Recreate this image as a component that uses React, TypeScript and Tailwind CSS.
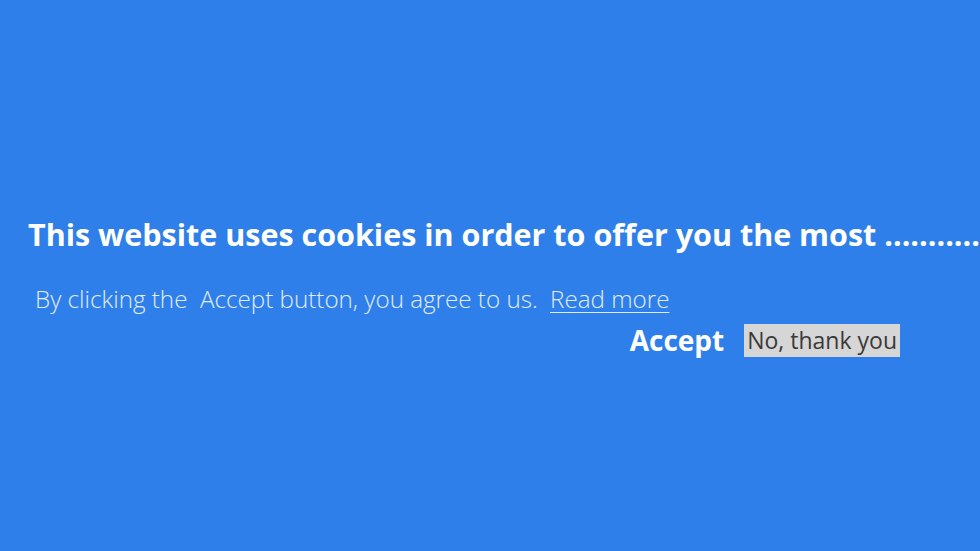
export default function App() {
	return (
		<div className="w-[980px] h-[551px] overflow-hidden bg-[#2e7fe9] font-['Open_Sans',sans-serif]">
			<div className="pt-[214px] pl-[28px]">
				<h1 className="whitespace-nowrap text-[30.5px] leading-[40px] font-bold text-white">
					This website uses cookies in order to offer you the most ...........
				</h1>
				<p className="mt-[29px] pl-[7px] text-[24.2px] leading-[32px] font-light text-white/85 whitespace-pre">
					By clicking the  Accept button, you agree to us.{' '}
					<a href="#" className="ml-[6px] underline underline-offset-[4px] decoration-1">
						Read more
					</a>
				</p>
				<div className="mt-[9px] flex items-center justify-end pr-[80px] gap-[20px]">
					<button className="text-[28px] leading-[33px] font-bold text-white">Accept</button>
					<button className="h-[33px] px-[3px] bg-[#d6d6d6] text-[#3a3a3a] text-[23px] leading-[33px] font-normal">
						No, thank you
					</button>
				</div>
			</div>
		</div>
	);
}
